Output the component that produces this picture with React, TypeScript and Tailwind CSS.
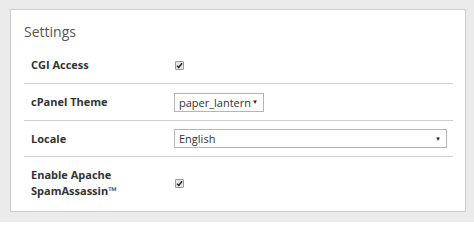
import React from 'react';

const CheckMark: React.FC = () => (
  <span className="flex h-[9px] w-[9px] items-center justify-center rounded-[1px] border border-[#9a9a9a] bg-[#e6e6e6]">
    <svg viewBox="0 0 10 10" className="h-[7px] w-[7px]">
      <path d="M1.5 5.2 L4 7.8 L8.6 1.8" fill="none" stroke="#222" strokeWidth="2" />
    </svg>
  </span>
);

const SelectBox: React.FC<{ value: string; wide?: boolean }> = ({ value, wide }) => (
  <div
    className={`flex h-[19px] items-center justify-between border border-[#b5b5b5] bg-white pl-[4px] pr-[5px] text-[11px] text-[#333] ${
      wide ? 'w-[273px]' : 'w-[90px]'
    }`}
  >
    <span className="leading-none">{value}</span>
    <span className="text-[6px] leading-none text-[#222]">▼</span>
  </div>
);

const Row: React.FC<{ label: React.ReactNode; children: React.ReactNode; last?: boolean; className?: string }> = ({
  label,
  children,
  last,
  className,
}) => (
  <div className={`flex items-center ${last ? '' : 'border-b border-[#cfcfcf]'} ${className ?? ''}`}>
    <div className="w-[150px] pl-[7px] text-[11px] font-bold leading-[16px] text-[#333]">{label}</div>
    <div className="flex items-center">{children}</div>
  </div>
);

export default function App() {
  return (
    <div className="h-[222px] w-[474px] bg-[#ebebeb] pl-[10px] pr-[8px] pt-[9px] font-['Open_Sans',sans-serif]">
      <div className="h-[203px] border border-[#cdcdcd] bg-white pl-[13px] pr-[12px] pt-[12px]">
        <h2 className="text-[14px] leading-[20px] text-[#555]">Settings</h2>
        <div className="mt-[5px]">
          <Row label="CGI Access" className="h-[37px]">
            <span className="ml-[1px]"><CheckMark /></span>
          </Row>
          <Row label="cPanel Theme" className="h-[37px]">
            <SelectBox value="paper_lantern" />
          </Row>
          <Row label="Locale" className="h-[36px]">
            <SelectBox value="English" wide />
          </Row>
          <Row label={<>Enable Apache<br />SpamAssassin™</>} last className="h-[52px]">
            <span className="ml-[1px]"><CheckMark /></span>
          </Row>
        </div>
      </div>
    </div>
  );
}
